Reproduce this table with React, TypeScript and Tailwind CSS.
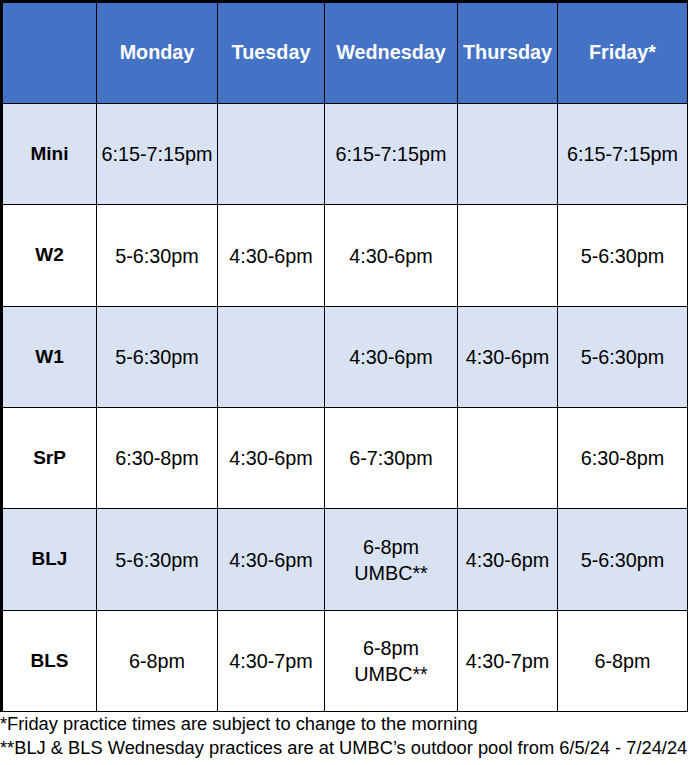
import React from 'react';

const days = ['Monday', 'Tuesday', 'Wednesday', 'Thursday', 'Friday*'];

const rows: { name: string; times: string[]; shaded: boolean; h: string }[] = [
  { name: 'Mini', times: ['6:15-7:15pm', '', '6:15-7:15pm', '', '6:15-7:15pm'], shaded: true, h: 'h-[101px]' },
  { name: 'W2', times: ['5-6:30pm', '4:30-6pm', '4:30-6pm', '', '5-6:30pm'], shaded: false, h: 'h-[102px]' },
  { name: 'W1', times: ['5-6:30pm', '', '4:30-6pm', '4:30-6pm', '5-6:30pm'], shaded: true, h: 'h-[101px]' },
  { name: 'SrP', times: ['6:30-8pm', '4:30-6pm', '6-7:30pm', '', '6:30-8pm'], shaded: false, h: 'h-[101px]' },
  { name: 'BLJ', times: ['5-6:30pm', '4:30-6pm', '6-8pm\nUMBC**', '4:30-6pm', '5-6:30pm'], shaded: true, h: 'h-[102px]' },
  { name: 'BLS', times: ['6-8pm', '4:30-7pm', '6-8pm\nUMBC**', '4:30-7pm', '6-8pm'], shaded: false, h: 'h-[101px]' },
];

const cols = 'grid grid-cols-[94px_121px_107px_133px_100px_130px]';

const App = () => {
  return (
    <div className="w-[695px] min-h-[765px] bg-white font-['Liberation_Sans',Arial,sans-serif] text-black">
      {/* Schedule table */}
      <div className="w-[688px] border-l-[3px] border-t-[3px] border-black">
        <div className={`${cols} h-[101px] bg-[#4472c4]`}>
          <div className="border-r border-b border-black" />
          {days.map((d) => (
            <div
              key={d}
              className="flex items-center justify-center border-r border-b border-black text-[19.8px] font-bold text-white"
            >
              {d}
            </div>
          ))}
        </div>

        {rows.map((row) => (
          <div key={row.name} className={`${cols} ${row.h} ${row.shaded ? 'bg-[#d9e2f3]' : 'bg-white'}`}>
            <div className="flex items-center justify-center border-r border-b border-black text-[19px] font-bold">
              {row.name}
            </div>
            {row.times.map((t, i) => (
              <div
                key={i}
                className="flex items-center justify-center whitespace-pre-line text-center border-r border-b border-black text-[19.8px] leading-[26px]"
              >
                {t}
              </div>
            ))}
          </div>
        ))}
      </div>

      {/* Notes */}
      <div className="text-[18.3px] leading-[24px] whitespace-nowrap">
        <p>*Friday practice times are subject to change to the morning</p>
        <p>**BLJ &amp; BLS Wednesday practices are at UMBC’s outdoor pool from 6/5/24 - 7/24/24</p>
      </div>
    </div>
  );
};

export default App;
